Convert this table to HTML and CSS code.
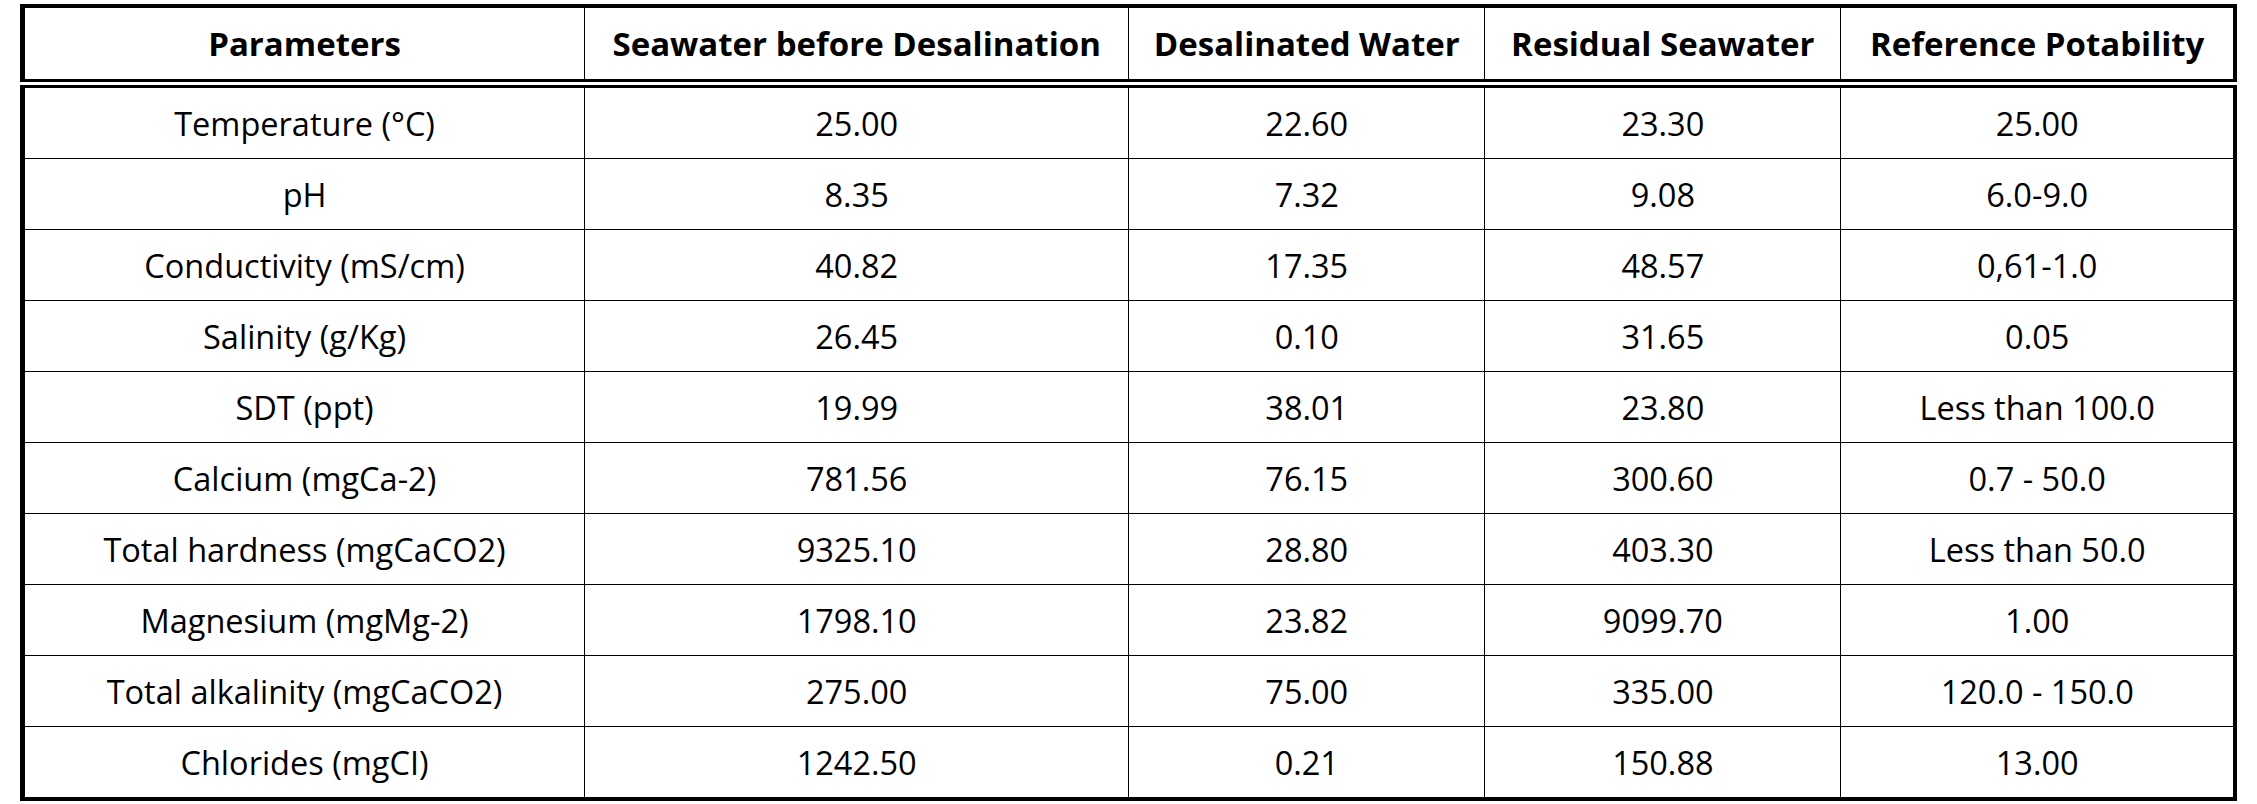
FILE: index.html
```html
<!DOCTYPE html>
<html>
<head>
<meta charset="utf-8">
<link rel="stylesheet" href="styles.css">
</head>
<body>
<table class="data">
  <colgroup>
    <col class="c1"><col class="c2"><col class="c3"><col class="c4"><col class="c5">
  </colgroup>
  <thead>
    <tr>
      <th>Parameters</th>
      <th>Seawater before Desalination</th>
      <th>Desalinated Water</th>
      <th>Residual Seawater</th>
      <th>Reference Potability</th>
    </tr>
  </thead>
  <tbody>
    <tr><td>Temperature (°C)</td><td>25.00</td><td>22.60</td><td>23.30</td><td>25.00</td></tr>
    <tr><td>pH</td><td>8.35</td><td>7.32</td><td>9.08</td><td>6.0-9.0</td></tr>
    <tr><td>Conductivity (mS/cm)</td><td>40.82</td><td>17.35</td><td>48.57</td><td>0,61-1.0</td></tr>
    <tr><td>Salinity (g/Kg)</td><td>26.45</td><td>0.10</td><td>31.65</td><td>0.05</td></tr>
    <tr><td>SDT (ppt)</td><td>19.99</td><td>38.01</td><td>23.80</td><td>Less than 100.0</td></tr>
    <tr><td>Calcium (mgCa-2)</td><td>781.56</td><td>76.15</td><td>300.60</td><td>0.7 - 50.0</td></tr>
    <tr><td>Total hardness (mgCaCO2)</td><td>9325.10</td><td>28.80</td><td>403.30</td><td>Less than 50.0</td></tr>
    <tr><td>Magnesium (mgMg-2)</td><td>1798.10</td><td>23.82</td><td>9099.70</td><td>1.00</td></tr>
    <tr><td>Total alkalinity (mgCaCO2)</td><td>275.00</td><td>75.00</td><td>335.00</td><td>120.0 - 150.0</td></tr>
    <tr><td>Chlorides (mgCI)</td><td>1242.50</td><td>0.21</td><td>150.88</td><td>13.00</td></tr>
  </tbody>
</table>
</body>
</html>
```
FILE: styles.css
```css
html, body {
  margin: 0;
  padding: 0;
  background: #fff;
}
body {
  padding: 4px 0 0 20px;
  font-family: "Open Sans", "Noto Sans", sans-serif;
  color: #000;
}
.data {
  border-collapse: collapse;
  table-layout: fixed;
  width: 2217px;
  border: 4px solid #000;
}
.c1 { width: 562px; }
.c2 { width: 544px; }
.c3 { width: 356px; }
.c4 { width: 356px; }
.c5 { width: 394px; }
.data th,
.data td {
  border: 1px solid #000;
  text-align: center;
  vertical-align: middle;
  padding: 0;
  white-space: nowrap;
  line-height: 1.2;
}
.data th {
  height: 71px;
  font-weight: 700;
  font-size: 33px;
  border-bottom: 9px double #000;
}
.data td {
  height: 70px;
  font-size: 32.5px;
  font-weight: 400;
}
.data tr > :first-child { border-left-width: 5px; }
```
